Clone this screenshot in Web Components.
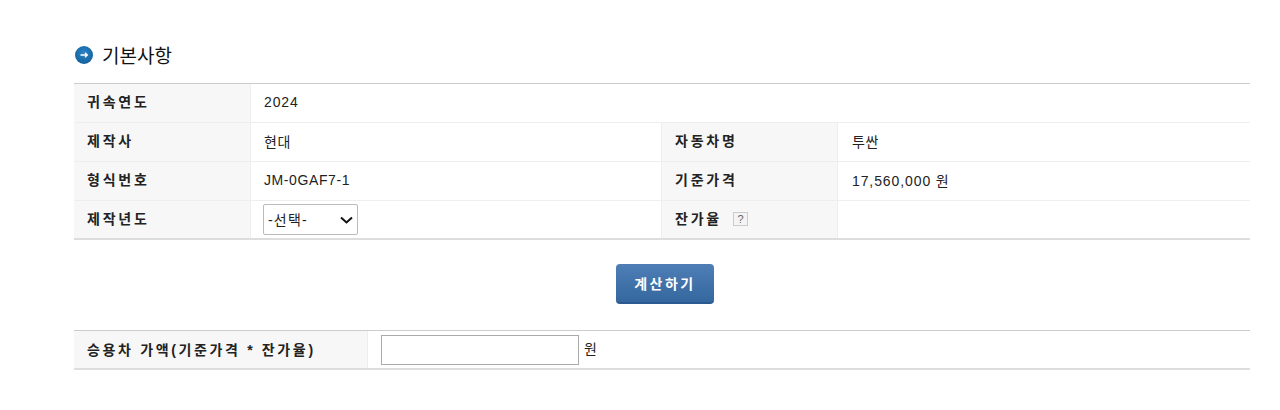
<!DOCTYPE html>
<html lang="ko">
<head>
<meta charset="utf-8">
<title>기본사항</title>
<style>
  html, body { margin: 0; background: #fff; }
  body { font-family: "Liberation Sans", "Noto Sans CJK KR", sans-serif; color: #333; }
</style>
</head>
<body>
<car-page>
  <section-title>기본사항</section-title>
  <info-table>
    <info-row>
      <info-cell label>귀속연도</info-cell>
      <info-cell wide style="letter-spacing: 0.9px">2024</info-cell>
    </info-row>
    <info-row>
      <info-cell label>제작사</info-cell>
      <info-cell>현대</info-cell>
      <info-cell label>자동차명</info-cell>
      <info-cell>투싼</info-cell>
    </info-row>
    <info-row>
      <info-cell label>형식번호</info-cell>
      <info-cell>JM-0GAF7-1</info-cell>
      <info-cell label>기준가격</info-cell>
      <info-cell style="letter-spacing: 0.9px">17,560,000 원</info-cell>
    </info-row>
    <info-row>
      <info-cell label>제작년도</info-cell>
      <info-cell><year-select></year-select></info-cell>
      <info-cell label>잔가율<help-badge></help-badge></info-cell>
      <info-cell></info-cell>
    </info-row>
  </info-table>
  <calc-button>계산하기</calc-button>
  <result-row>승용차 가액(기준가격 * 잔가율)</result-row>
</car-page>

<script>
function define (name, html) {
  const template = document.createElement('template');
  template.innerHTML = html;
  customElements.define(name, class extends HTMLElement {
    constructor () {
      super();
      this.attachShadow({ mode: 'open' }).append(template.content.cloneNode(true));
    }
  });
}

define('car-page', `
  <style>
    :host { display: block; padding: 43px 30px 0 74px; }
  </style>
  <slot></slot>
`);

define('section-title', `
  <style>
    :host { display: flex; align-items: center; height: 24px; margin-bottom: 16px; font-size: 19px; line-height: 24px; color: #111; }
    svg { margin: 0 9px 0 1px; }
    span { padding-top: 3px; }
  </style>
  <svg width="18" height="18" viewBox="0 0 18 18">
    <defs>
      <radialGradient id="ball" cx="0.5" cy="0.4" r="0.6">
        <stop offset="0" stop-color="#2a86c8"/>
        <stop offset="1" stop-color="#14609c"/>
      </radialGradient>
    </defs>
    <circle cx="9" cy="9" r="9" fill="url(#ball)"/>
    <path d="M5.500 9h7M10 6.800 12.300 9 10 11.200" fill="none" stroke="#fff" stroke-width="1.400"/>
  </svg>
  <span><slot></slot></span>
`);

define('info-table', `
  <style>
    :host { display: block; border-top: 1px solid #ccc; border-bottom: 2px solid #ddd; }
  </style>
  <slot></slot>
`);

define('info-row', `
  <style>
    :host { display: grid; grid-template-columns: 177px 411px 176px 412px; height: 38px; border-bottom: 1px solid #eee; }
    :host(:last-child) { border-bottom: 0; height: 37px; }
  </style>
  <slot></slot>
`);

define('info-cell', `
  <style>
    :host { display: flex; align-items: center; padding: 0 0 2px 13px; font-size: 14px; letter-spacing: 0.6px; color: #222; border-right: 1px solid #eee; box-sizing: border-box; }
    :host([label]) { padding-bottom: 4px; background: #f7f7f7; font-weight: bold; letter-spacing: 2.800px; color: #222; }
    :host(:last-child) { border-right: 0; padding-left: 14px; }
    :host([wide]) { grid-column: 2 / 5; border-right: 0; padding-left: 13px; }
  </style>
  <slot></slot>
`);

define('year-select', `
  <style>
    :host { display: block; position: relative; width: 95px; height: 31px; margin: 2px 0 0 -1px; }
    select { display: block; width: 95px; height: 31px; padding: 0 0 0 4px; appearance: none; background: #fff; border: 1px solid #bbb; border-radius: 2px; font: 14px "Liberation Sans", "Noto Sans CJK KR", sans-serif; letter-spacing: 1.200px; color: #222; }
    svg { position: absolute; right: 5px; top: 12px; pointer-events: none; }
  </style>
  <select><option>-선택-</option></select>
  <svg width="13" height="8" viewBox="0 0 13 8"><path d="M1 1.500 6.500 6.500l5.500-5" fill="none" stroke="#111" stroke-width="2"/></svg>
`);

define('help-badge', `
  <style>
    :host { display: inline-block; margin: 2px 0 0 11px; width: 15px; height: 14px; box-sizing: border-box; border: 1px solid #ccc; background: #f4f4f4; font: 11px/12px "Liberation Sans", sans-serif; text-align: center; color: #666; letter-spacing: 0; }
  </style>
  ?
`);

define('calc-button', `
  <style>
    :host { display: flex; justify-content: center; padding-left: 6px; margin: 24px 0 26px; }
    button { width: 98px; height: 40px; padding: 0 0 1px; border: 0; border-bottom: 2px solid #2b5a90; border-radius: 4px; background: linear-gradient(#4f7eb6, #34689f); color: #fff; font: bold 14px "Liberation Sans", "Noto Sans CJK KR", sans-serif; letter-spacing: 2.500px; }
  </style>
  <button><slot></slot></button>
`);

define('result-row', `
  <style>
    :host { display: grid; grid-template-columns: 294px 1fr; height: 37px; border-top: 1px solid #ccc; border-bottom: 2px solid #ddd; }
    .name { display: flex; align-items: center; padding: 0 0 1px 13px; background: #f7f7f7; font-size: 14px; font-weight: bold; letter-spacing: 2.650px; color: #222; border-right: 1px solid #eee; }
    .value { display: flex; align-items: center; padding-left: 13px; font-size: 14px; color: #222; }
    input { width: 198px; height: 30px; box-sizing: border-box; margin: 0 5px 0 0; border: 1px solid #aaa; background: #fff; }
    span { padding-bottom: 4px; }
  </style>
  <div class="name"><slot></slot></div>
  <div class="value"><input type="text"> <span>원</span></div>
`);
</script>
</body>
</html>
